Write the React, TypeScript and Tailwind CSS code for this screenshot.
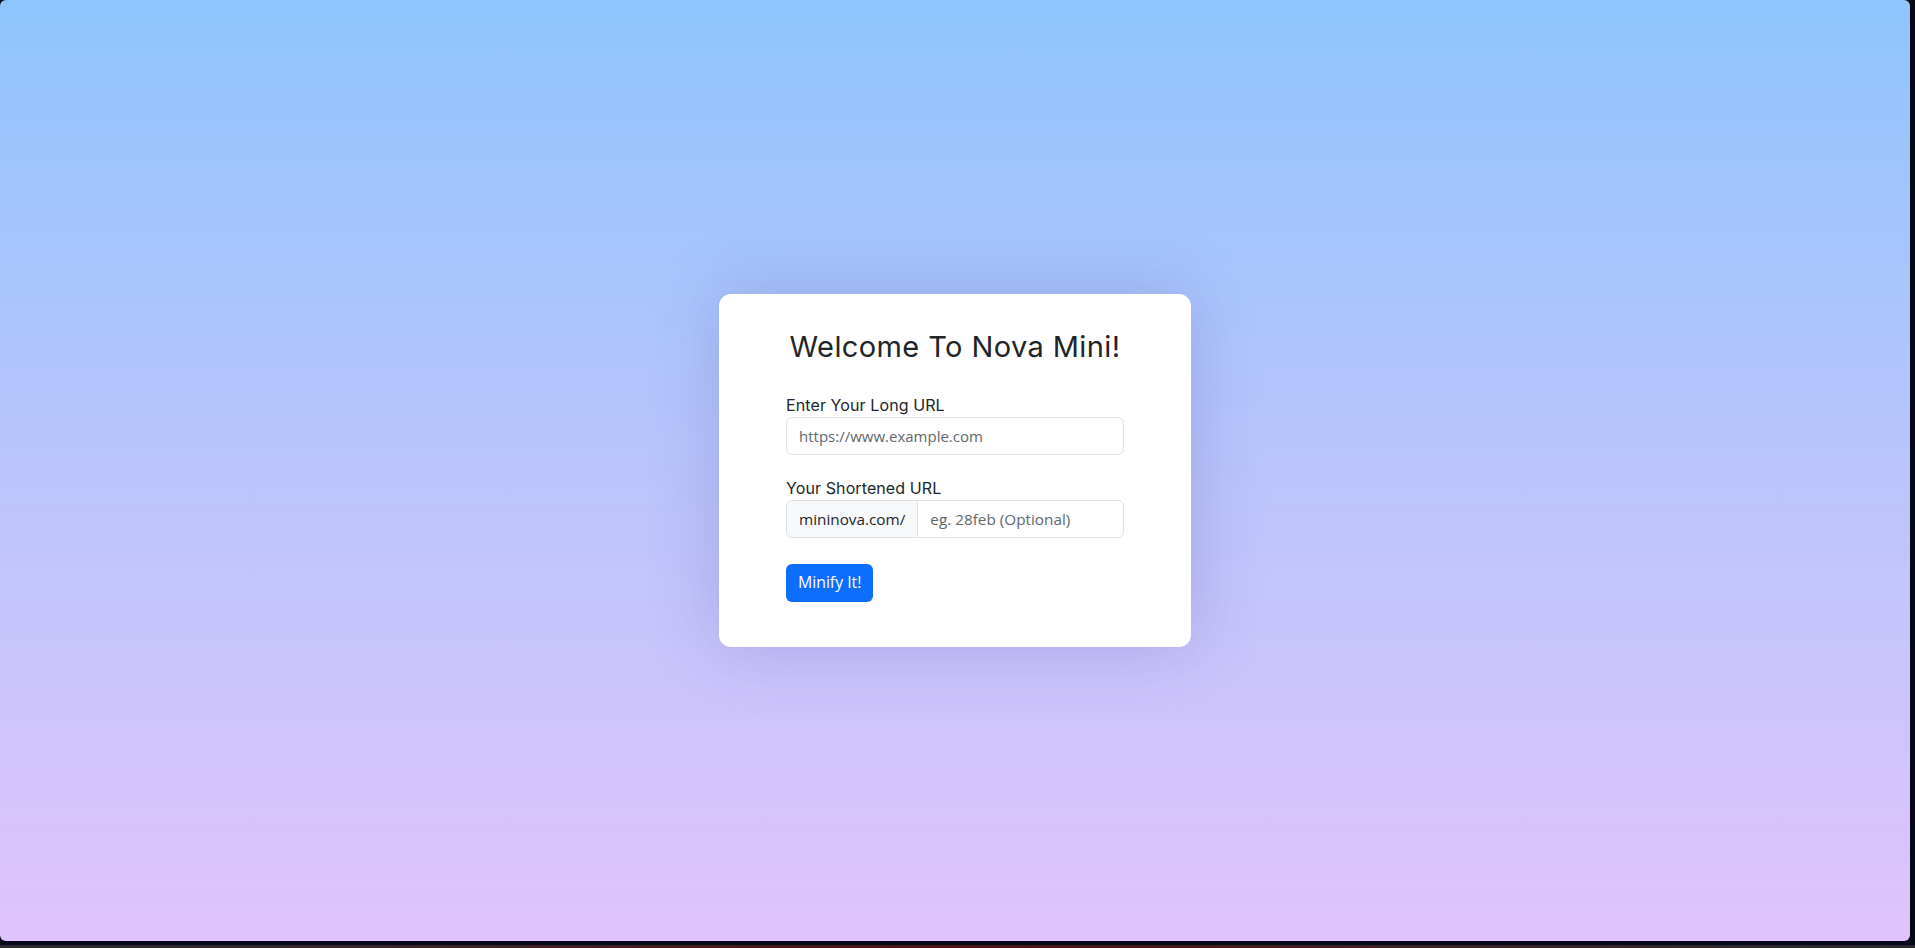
export default function App() {
  return (
    <div className="flex h-screen w-full flex-col bg-[#050816]">
      <div className="flex h-[941px] w-[1910px] items-center justify-center rounded-md bg-linear-to-t from-[#e0c3fc] to-[#8ec5fc]">
        <div className="w-[472px] rounded-xl bg-white px-[67px] pt-[36px] pb-[45px] shadow-[0_0_70px_rgba(60,60,150,0.22)]">
          <h3 className="text-center font-['Inter',sans-serif] text-[29px] leading-[34px] font-normal tracking-[0.4px] text-[#212529]">
            Welcome To Nova Mini!
          </h3>

          <label className="mt-[29px] block font-['Inter',sans-serif] text-[16px] leading-[24px] tracking-[0.1px] text-[#212529]">
            Enter Your Long URL
          </label>
          <input
            type="text"
            placeholder="https://www.example.com"
            className="block h-[38px] w-full rounded-md border border-[#dee2e6] bg-white px-3 font-['Open_Sans',sans-serif] text-[15px] text-[#212529] outline-none placeholder:text-[#62676c]"
          />

          <label className="mt-[21px] block font-['Inter',sans-serif] text-[16px] leading-[24px] tracking-[0.1px] text-[#212529]">
            Your Shortened URL
          </label>
          <div className="flex h-[38px] w-full">
            <span className="flex items-center rounded-l-md border border-[#dee2e6] bg-[#f8f9fa] px-3 font-['Open_Sans',sans-serif] text-[15.3px] text-[#212529]">
              mininova.com/
            </span>
            <input
              type="text"
              placeholder="eg. 28feb (Optional)"
              className="-ml-px block h-full min-w-0 flex-1 rounded-r-md border border-[#dee2e6] bg-white px-3 font-['Open_Sans',sans-serif] text-[15.3px] text-[#212529] outline-none placeholder:text-[#62676c]"
            />
          </div>

          <button
            type="button"
            className="mt-[26px] h-[38px] rounded-md bg-[#0d6efd] px-3 font-['Open_Sans',sans-serif] text-[15.8px] text-white"
          >
            Minify It!
          </button>
        </div>
      </div>
      <div className="mt-auto h-[3px] w-full bg-linear-to-r from-[#2b2b2b] via-[#4a1616] to-[#2a2a2a]" />
    </div>
  );
}
